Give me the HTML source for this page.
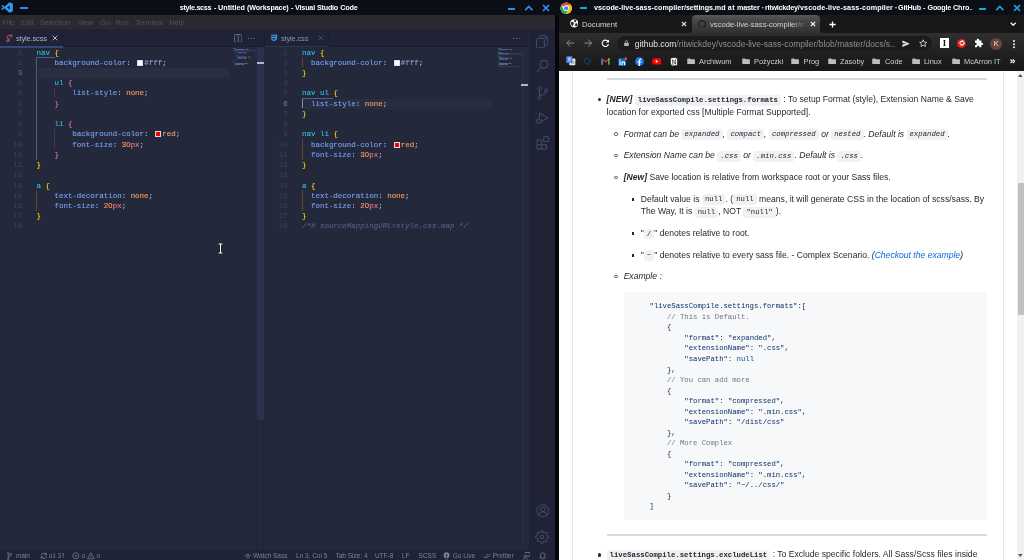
<!DOCTYPE html>
<html>
<head>
<meta charset="utf-8">
<title>screenshot</title>
<style>
*{box-sizing:border-box;margin:0;padding:0}
html,body{width:1024px;height:560px;overflow:hidden;background:#05070b;font-family:"Liberation Sans",sans-serif;}
.abs{position:absolute}
#root{position:relative;width:1024px;height:560px;overflow:hidden;background:#05070b;will-change:transform}

/* ---------- title bars ---------- */
#tb{left:0;top:0;width:1024px;height:15px;background:#0b0f15}
.ttl{position:absolute;top:0;height:15px;line-height:15px;color:#fff;font-weight:bold;font-size:7.2px;white-space:nowrap}
#t1{letter-spacing:-0.12px}#t2{letter-spacing:-0.077px}

/* ---------- VS Code ---------- */
#vs{left:0;top:15px;width:555px;height:545px;background:#24283b;overflow:hidden}
#menu{left:0;top:0;width:555px;height:14px;background:#29292f;color:#505056;font-size:7.3px;line-height:14px;white-space:nowrap}
#menu span{position:absolute;top:0.5px}
#tabs{left:0;top:14px;width:528px;height:18px;background:#1f2335}
.tabtxt{position:absolute;font-size:7.6px;line-height:18px;top:0.5px;white-space:nowrap;letter-spacing:-0.2px}
#act{left:528.6px;top:14px;width:26.4px;height:521px;background:#1f2335}
#status{left:0;top:534.8px;width:555px;height:10.2px;background:#1f2335;color:#7a80a0;font-size:6.5px;line-height:11.4px;white-space:nowrap}
#status span{position:absolute;top:0}
.ed{position:absolute;top:32px;height:502px;background:#24283b;overflow:hidden}
.code{position:absolute;top:0.5px;font-family:"Liberation Mono",monospace;font-size:7.47px;line-height:10.24px;white-space:pre;color:#9abdf5;-webkit-text-stroke:0.1px currentColor}
.ln{position:absolute;top:0.5px;font-family:"Liberation Mono",monospace;font-size:7.47px;line-height:10.24px;white-space:pre;color:#3b4261;text-align:right}
.ln b{font-weight:normal;color:#737aa2}
.s{color:#2ac3de}.p{color:#7aa2f7}.v{color:#ff9e64}.u{color:#f7768e}.h{color:#9aa5ce}.g{color:#ffd700}.o{color:#da70d6}.c{color:#565f89;font-style:italic}.pt{color:#89ddff}
.z{font-family:"Liberation Sans",sans-serif;font-style:normal;display:inline-block;width:4.482px;text-align:center;font-size:7.6px;line-height:1}
.sw{display:inline-block;width:6px;height:6px;border:0.7px solid #d8dcea;margin:0 1.3px 0 1.9px;vertical-align:-0.9px}

/* ---------- Chrome ---------- */
#ch{left:559px;top:15px;width:465px;height:545px;background:#fff;overflow:hidden}
#cstrip{left:0;top:0;width:465px;height:18px;background:#181818}
#ctool{left:0;top:18px;width:465px;height:19px;background:linear-gradient(#2f2f2f,#212121)}
#cbm{left:0;top:37px;width:465px;height:18.5px;background:linear-gradient(#212121,#171717);color:#cfcfcf;font-size:7.4px;line-height:18.5px;white-space:nowrap}
#cbm span{position:absolute;top:0.9px}
#page{left:0;top:55.5px;width:458px;height:489.5px;background:#fff;overflow:hidden}
#sb{left:458px;top:55.5px;width:7px;height:489.5px;background:#f1f1f1}

/* github markdown */
#box{position:absolute;left:12.5px;top:-40px;width:432.5px;height:700px;border-left:1px solid #e2e6ed;border-right:1px solid #e2e6ed}
#md{position:absolute;left:30.5px;top:-5.0px;width:397px;color:#24292f;font-size:8.6px;line-height:12.8px}
#md ul{padding-left:17.07px}
#md li>p{margin-top:8.85px;margin-bottom:8.85px}
#md hr{border:0;height:2.13px;background:#d5dbe3;margin:12.8px 0}
#md code{font-family:"Liberation Mono",monospace;font-size:7.31px;background:#eff1f3;border-radius:3.2px;padding:1.3px 3.05px;font-style:inherit;line-height:1}
#md pre{font-family:"Liberation Mono",monospace;font-size:7.25px;line-height:10.52px;background:#f6f8fa;border-radius:3.2px;padding:8.93px 8.53px 8.13px;margin:9.4px 0 14.2px 0;white-space:pre;overflow:hidden;color:#24292f}
#md pre .k{color:#6e7781}.n{color:#0550ae}.st{color:#0a3069}
#md a{color:#0969da;text-decoration:none}
#md ul{list-style:none}
#md li>p:first-of-type{position:relative}
#md li>p:first-of-type::before{content:"";position:absolute;left:-8.5px;top:4.9px;width:3.3px;height:3.3px;background:#24292f;border-radius:50%}
#md ul.ci>li>p:first-of-type::before{box-sizing:border-box;background:#fff;border:0.7px solid #4a4f57;left:-9.3px;top:4.8px;width:3.4px;height:3.4px}
#md ul.sq>li>p:first-of-type::before{border-radius:0;left:-9.0px;top:5.3px;width:2.8px;height:2.8px}
</style>
</head>
<body>
<div id="root">

<!-- title bar -->
<div id="tb" class="abs">
  <!-- vscode logo -->
  <svg class="abs" style="left:0.5px;top:2px" width="12" height="11" viewBox="0 0 24 22"><path d="M17 0.3 L7 9.3 L2.8 6 L0.3 7.2 L4.2 11 L0.3 14.8 L2.8 16 L7 12.7 L17 21.7 L23.6 18.8 V3.2 Z M17.4 7.2 V14.8 L12.2 11 Z" fill="#2a9cf4"/></svg>
  <div class="abs" style="left:20px;top:7px;width:7.5px;height:1.6px;background:#2e8bf0"></div>
  <div class="ttl" style="left:179.75px;letter-spacing:-0.287px">style.scss</div>
  <div class="ttl" style="left:214px;letter-spacing:0.000px">-</div>
  <div class="ttl" style="left:218px;letter-spacing:0.031px">Untitled</div>
  <div class="ttl" style="left:247px;letter-spacing:-0.137px">(Workspace)</div>
  <div class="ttl" style="left:291px;letter-spacing:0.000px">-</div>
  <div class="ttl" style="left:295px;letter-spacing:-0.174px">Visual</div>
  <div class="ttl" style="left:317px;letter-spacing:-0.226px">Studio</div>
  <div class="ttl" style="left:340.25px;letter-spacing:-0.117px">Code</div>
  <!-- vs controls -->
  <div class="abs" style="left:508px;top:8px;width:7.4px;height:1.7px;background:#2e8bf0"></div>
  <svg class="abs" style="left:524px;top:4px" width="10" height="8" viewBox="0 0 10 8"><path d="M1.2 6.2 L4.8 2.4 L8.4 6.2" fill="none" stroke="#2e8bf0" stroke-width="1.7"/></svg>
  <svg class="abs" style="left:542px;top:4px" width="8" height="8" viewBox="0 0 8 8"><path d="M1 1.2 L7 6.8 M7 1.2 L1 6.8" fill="none" stroke="#2e8bf0" stroke-width="1.6"/></svg>
  <!-- chrome logo -->
  <svg class="abs" style="left:560px;top:2px" width="12.4" height="12.4" viewBox="0 0 48 48"><circle cx="24" cy="24" r="22" fill="#fff"/><path d="M24 2 A22 22 0 0 1 43.05 13 H24 A11 11 0 0 0 14.47 18.5 L5 13.1 A22 22 0 0 1 24 2Z" fill="#ea4335"/><path d="M43.05 13 A22 22 0 0 1 24 46 L33.53 29.5 A11 11 0 0 0 33.53 18.5 L24 13Z" fill="#fbbc05"/><path d="M5 13.1 L14.47 29.5 A11 11 0 0 0 33.53 29.5 L24 46 A22 22 0 0 1 5 13.1Z" fill="#34a853"/><circle cx="24" cy="24" r="10" fill="#fff"/><circle cx="24" cy="24" r="8" fill="#4285f4"/></svg>
  <div class="abs" style="left:580px;top:7px;width:7.2px;height:1.6px;background:#1ca4dc"></div>
  <div class="ttl" style="left:594px;letter-spacing:0.005px">vscode-live-sass-compiler</div>
  <div class="ttl" style="left:684px;letter-spacing:-0.069px">/settings.md</div>
  <div class="ttl" style="left:727.75px;letter-spacing:0.430px">at</div>
  <div class="ttl" style="left:737px;letter-spacing:-0.179px">master</div>
  <div class="ttl" style="left:761.75px;letter-spacing:0.000px">·</div>
  <div class="ttl" style="left:765px;letter-spacing:-0.240px">ritwickdey</div>
  <div class="ttl" style="left:797.75px;letter-spacing:0.130px">/vscode-live-sass-compiler</div>
  <div class="ttl" style="left:895px;letter-spacing:0.000px">·</div>
  <div class="ttl" style="left:898px;letter-spacing:-0.159px">GitHub</div>
  <div class="ttl" style="left:923px;letter-spacing:0.000px">-</div>
  <div class="ttl" style="left:927.5px;letter-spacing:-0.209px">Google</div>
  <div class="ttl" style="left:953px;letter-spacing:-0.1px">Chro<span style="font-size:4.6px;letter-spacing:-0.3px">...</span></div>
  <!-- chrome controls -->
  <div class="abs" style="left:978.5px;top:8px;width:7.4px;height:1.7px;background:#1ca4dc"></div>
  <svg class="abs" style="left:995px;top:4px" width="10" height="8" viewBox="0 0 10 8"><path d="M1.2 6.2 L4.8 2.4 L8.4 6.2" fill="none" stroke="#1ca4dc" stroke-width="1.7"/></svg>
  <svg class="abs" style="left:1013px;top:4px" width="8" height="8" viewBox="0 0 8 8"><path d="M1 1.2 L7 6.8 M7 1.2 L1 6.8" fill="none" stroke="#1ca4dc" stroke-width="1.6"/></svg>
</div>

<!-- VS CODE -->
<div id="vs" class="abs">
  <div id="menu" class="abs">
    <span style="left:2.3px">File</span><span style="left:21px">Edit</span><span style="left:40px">Selection</span><span style="left:77.5px">View</span><span style="left:100px">Go</span><span style="left:115.5px">Run</span><span style="left:135.4px">Terminal</span><span style="left:169.5px">Help</span>
  </div>
  <div id="tabs" class="abs">
    <!-- tab 1 active -->
    <div class="abs" style="left:0;top:0;width:62.5px;height:18px;background:#1f2335;border-right:0.7px solid #1b1e2f"></div>
    <svg class="abs" style="left:4.5px;top:4.5px" width="8.5" height="9" viewBox="0 0 17 18"><path d="M13.5 2.2 C9.5 1.2 3.2 4.2 3.4 7.2 C3.6 9.6 8.6 9.2 9.2 11.4 C9.8 13.6 5.2 16.4 3.4 14.6 C2 13 5.4 10.4 8 12.8 M13.5 2.2 C15.6 3 14.2 6.2 10.8 6.6" fill="none" stroke="#e0566c" stroke-width="1.9" stroke-linecap="round"/></svg>
    <div class="tabtxt" style="left:16px;color:#a9b1d6">style.scss</div>
    <svg class="abs" style="left:52px;top:6px" width="6" height="6" viewBox="0 0 6 6"><path d="M0.7 0.7 L5.3 5.3 M5.3 0.7 L0.7 5.3" stroke="#c0c6e0" stroke-width="0.9" fill="none"/></svg>
    <!-- split / more -->
    <svg class="abs" style="left:234px;top:4.6px" width="8.4" height="8.8" viewBox="0 0 8.4 8.8"><rect x="0.5" y="0.5" width="7.4" height="7.8" rx="1.2" fill="none" stroke="#6b7394" stroke-width="0.9"/><path d="M4.2 0.5 V8.3" stroke="#6b7394" stroke-width="0.9"/></svg>
    <div class="abs" style="left:248.4px;top:8.6px;width:1.1px;height:1.1px;background:#6b7394;box-shadow:2.9px 0 #6b7394,5.8px 0 #6b7394"></div>
    <!-- group 2 -->
    <div class="abs" style="left:264px;top:0;width:1px;height:18px;background:#1a1d2e"></div>
    <div class="abs" style="left:62.5px;top:17.2px;width:202px;height:0.8px;background:#1a1d2e"></div>
    <div class="abs" style="left:265px;top:17.2px;width:263px;height:0.8px;background:#1a1d2e"></div>
    <div class="abs" style="left:265px;top:16.9px;width:63px;height:1.1px;background:#2f3450"></div>
    <div class="abs" style="left:327.6px;top:0;width:0.7px;height:18px;background:#1b1e2f"></div>
    <svg class="abs" style="left:269.8px;top:5.4px" width="8" height="7.4" viewBox="0 0 16 16" preserveAspectRatio="none"><path d="M1.5 1.5 H14.5 L13.2 13 L8 15 L2.8 13 L2.5 10 H5 L5.2 11.4 L8 12.4 L10.8 11.4 L11.2 8.6 H2.4 L2.1 6 H11.5 L11.8 4 H1.8 Z" fill="#42a5f5"/></svg>
    <div class="tabtxt" style="left:281px;color:#8b90ad">style.css</div>
    <svg class="abs" style="left:318px;top:6.2px" width="5.6" height="5.6" viewBox="0 0 6 6"><path d="M0.7 0.7 L5.3 5.3 M5.3 0.7 L0.7 5.3" stroke="#565f89" stroke-width="0.8" fill="none"/></svg>
    <div class="abs" style="left:512.6px;top:8.6px;width:1.1px;height:1.1px;background:#6b7394;box-shadow:2.9px 0 #6b7394,5.8px 0 #6b7394"></div>
  </div>
  <div id="act" class="abs">
    <!-- files -->
    <svg class="abs" style="left:7.2px;top:5.6px" width="12.4" height="13.4" viewBox="0 0 24.8 26.8"><path d="M8.2 6.4 V3 Q8.2 1 10.2 1 H18.4 L23.6 6.2 V17.6 Q23.6 19.6 21.6 19.6 H16.8" fill="none" stroke="#4a5173" stroke-width="1.8"/><path d="M18 1.2 V6.6 H23.4" fill="none" stroke="#4a5173" stroke-width="1.6"/><path d="M3 6.8 H14.6 Q16.6 6.8 16.6 8.8 V23.6 Q16.6 25.6 14.6 25.6 H3 Q1 25.6 1 23.6 V8.8 Q1 6.8 3 6.8 Z" fill="none" stroke="#4a5173" stroke-width="1.8"/></svg>
    <!-- search -->
    <svg class="abs" style="left:7.5px;top:30px" width="13" height="14" viewBox="0 0 26 28"><circle cx="16" cy="10.5" r="8" fill="none" stroke="#4a5173" stroke-width="1.9"/><path d="M10.3 16.5 L2 26" stroke="#4a5173" stroke-width="1.9" fill="none"/></svg>
    <!-- scm -->
    <svg class="abs" style="left:8px;top:56.5px" width="11.5" height="14" viewBox="0 0 23 28"><circle cx="5" cy="4.5" r="3" fill="none" stroke="#4a5173" stroke-width="1.8"/><circle cx="5" cy="23.5" r="3" fill="none" stroke="#4a5173" stroke-width="1.8"/><circle cx="18" cy="9" r="3" fill="none" stroke="#4a5173" stroke-width="1.8"/><path d="M5 7.5 V20.5 M18 12 Q18 17 5 19" fill="none" stroke="#4a5173" stroke-width="1.8"/></svg>
    <!-- debug -->
    <svg class="abs" style="left:6.5px;top:81.5px" width="14.5" height="14" viewBox="0 0 29 28"><path d="M9 4 L26 13.5 L13 21" fill="none" stroke="#4a5173" stroke-width="1.9" stroke-linejoin="round"/><path d="M9 4 V13" stroke="#4a5173" stroke-width="1.9"/><circle cx="7.5" cy="20.5" r="4.3" fill="none" stroke="#4a5173" stroke-width="1.7"/><path d="M1 17 L3.5 18.5 M1 24.5 L3.5 23 M14 17 L11.5 18.5 M14 24.5 L11.5 23 M7.5 14 V16" stroke="#4a5173" stroke-width="1.4"/></svg>
    <!-- extensions -->
    <svg class="abs" style="left:7.5px;top:107px" width="13.5" height="13.5" viewBox="0 0 27 27"><path d="M2 8 H11.5 V17.5 H21 V26 H2 Z M11.5 17.5 H2 M11.5 17.5 V26" fill="none" stroke="#4a5173" stroke-width="1.8" stroke-linejoin="round"/><rect x="15.5" y="1.5" width="9.5" height="9.5" rx="1" fill="none" stroke="#4a5173" stroke-width="1.8"/></svg>
    <!-- account -->
    <svg class="abs" style="left:7px;top:475px" width="13.5" height="13.5" viewBox="0 0 27 27"><circle cx="13.5" cy="13.5" r="12" fill="none" stroke="#4a5173" stroke-width="1.8"/><circle cx="13.5" cy="10.5" r="4.5" fill="none" stroke="#4a5173" stroke-width="1.8"/><path d="M5.5 22 Q6 15.5 13.5 15.5 Q21 15.5 21.5 22" fill="none" stroke="#4a5173" stroke-width="1.8"/></svg>
    <!-- gear -->
    <svg class="abs" style="left:6.6px;top:500.8px" width="14" height="14" viewBox="0 0 27 27"><path d="M11.14 4.61 L11.86 1.31 L15.14 1.31 L15.86 4.61 L18.12 5.54 L20.96 3.72 L23.28 6.04 L21.46 8.88 L22.39 11.14 L25.69 11.86 L25.69 15.14 L22.39 15.86 L21.46 18.12 L23.28 20.96 L20.96 23.28 L18.12 21.46 L15.86 22.39 L15.14 25.69 L11.86 25.69 L11.14 22.39 L8.88 21.46 L6.04 23.28 L3.72 20.96 L5.54 18.12 L4.61 15.86 L1.31 15.14 L1.31 11.86 L4.61 11.14 L5.54 8.88 L3.72 6.04 L6.04 3.72 L8.88 5.54 Z" fill="none" stroke="#4a5173" stroke-width="1.7" stroke-linejoin="round"/><circle cx="13.5" cy="13.5" r="3.4" fill="none" stroke="#4a5173" stroke-width="1.7"/></svg>
  </div>
  <div id="ed1" class="ed" style="left:0;width:264px">
    <div class="abs" style="left:37.5px;top:20.78px;width:191.5px;height:10.24px;background:#2a2e43"></div>
    <!-- guides -->
    <div class="abs" style="left:36.2px;top:10.24px;width:1px;height:102.40px;background:#4d5d92"></div>
    <div class="abs" style="left:36.2px;top:9.94px;width:18.5px;height:1px;background:#4d5d92"></div>
    <div class="abs" style="left:54.3px;top:40.96px;width:1px;height:10.24px;background:#4a3160"></div>
    <div class="abs" style="left:54.3px;top:81.92px;width:1px;height:20.48px;background:#4a3160"></div>
    <div class="abs" style="left:36.2px;top:143.36px;width:1px;height:20.48px;background:#5d4a2c"></div>
    <div class="ln" style="left:0;width:22.3px">1
2
<b>3</b>
4
5
6
7
8
9
10
11
12
13
14
15
16
17
18</div>
    <div class="code" style="left:36.5px"><span class="s">nav</span> <span class="g">{</span>
    <span class="p">background-color</span>: <i class="sw" style="background:#fff"></i><span class="h">#fff</span>;

    <span class="s">ul</span> <span class="o">{</span>
        <span class="p">list-style</span>: <span class="v">none</span>;
    <span class="o">}</span>

    <span class="s">li</span> <span class="o">{</span>
        <span class="p">background-color</span>: <i class="sw" style="background:#f00"></i><span class="v">red</span>;
        <span class="p">font-size</span>: <span class="v">3<i class="z">0</i></span><span class="u">px</span>;
    <span class="o">}</span>
<span class="g">}</span>

<span class="s">a</span> <span class="g">{</span>
    <span class="p">text-decoration</span>: <span class="v">none</span>;
    <span class="p">font-size</span>: <span class="v">2<i class="z">0</i></span><span class="u">px</span>;
<span class="g">}</span>
</div>
    <!-- minimap -->
    <div class="abs mm" style="left:233px;top:0;width:24px;height:30px"><svg class="abs mmsvg" width="24" height="22" viewBox="0 0 24 22" style="left:0;top:0.6px"><rect x="0" y="2.13" width="24" height="1.07" fill="#3d59a1" opacity="0.55"/><rect x="0.00" y="0.10" width="1.68" height="0.85" fill="#2ac3de" opacity="0.6"/><rect x="2.24" y="0.10" width="0.56" height="0.85" fill="#c9a600" opacity="0.6"/><rect x="2.24" y="1.17" width="8.96" height="0.85" fill="#7aa2f7" opacity="0.6"/><rect x="11.20" y="1.17" width="0.56" height="0.85" fill="#8790b5" opacity="0.6"/><rect x="12.88" y="1.17" width="2.24" height="0.85" fill="#8790b5" opacity="0.6"/><rect x="15.12" y="1.17" width="0.56" height="0.85" fill="#8790b5" opacity="0.6"/><rect x="2.24" y="3.30" width="1.12" height="0.85" fill="#2ac3de" opacity="0.6"/><rect x="3.92" y="3.30" width="0.56" height="0.85" fill="#b35fb0" opacity="0.6"/><rect x="4.48" y="4.37" width="5.60" height="0.85" fill="#7aa2f7" opacity="0.6"/><rect x="10.08" y="4.37" width="0.56" height="0.85" fill="#8790b5" opacity="0.6"/><rect x="11.20" y="4.37" width="2.24" height="0.85" fill="#ff9e64" opacity="0.6"/><rect x="13.44" y="4.37" width="0.56" height="0.85" fill="#8790b5" opacity="0.6"/><rect x="2.24" y="5.43" width="0.56" height="0.85" fill="#b35fb0" opacity="0.6"/><rect x="2.24" y="7.57" width="1.12" height="0.85" fill="#2ac3de" opacity="0.6"/><rect x="3.92" y="7.57" width="0.56" height="0.85" fill="#b35fb0" opacity="0.6"/><rect x="4.48" y="8.64" width="8.96" height="0.85" fill="#7aa2f7" opacity="0.6"/><rect x="13.44" y="8.64" width="0.56" height="0.85" fill="#8790b5" opacity="0.6"/><rect x="15.12" y="8.64" width="1.68" height="0.85" fill="#ff9e64" opacity="0.6"/><rect x="16.80" y="8.64" width="0.56" height="0.85" fill="#8790b5" opacity="0.6"/><rect x="4.48" y="9.70" width="5.04" height="0.85" fill="#7aa2f7" opacity="0.6"/><rect x="9.52" y="9.70" width="0.56" height="0.85" fill="#8790b5" opacity="0.6"/><rect x="10.64" y="9.70" width="2.24" height="0.85" fill="#ff9e64" opacity="0.6"/><rect x="12.88" y="9.70" width="0.56" height="0.85" fill="#8790b5" opacity="0.6"/><rect x="2.24" y="10.77" width="0.56" height="0.85" fill="#b35fb0" opacity="0.6"/><rect x="0.00" y="11.84" width="0.56" height="0.85" fill="#c9a600" opacity="0.6"/><rect x="0.00" y="13.97" width="0.56" height="0.85" fill="#2ac3de" opacity="0.6"/><rect x="1.12" y="13.97" width="0.56" height="0.85" fill="#c9a600" opacity="0.6"/><rect x="2.24" y="15.04" width="8.40" height="0.85" fill="#7aa2f7" opacity="0.6"/><rect x="10.64" y="15.04" width="0.56" height="0.85" fill="#8790b5" opacity="0.6"/><rect x="11.76" y="15.04" width="2.24" height="0.85" fill="#ff9e64" opacity="0.6"/><rect x="14.00" y="15.04" width="0.56" height="0.85" fill="#8790b5" opacity="0.6"/><rect x="2.24" y="16.11" width="5.04" height="0.85" fill="#7aa2f7" opacity="0.6"/><rect x="7.28" y="16.11" width="0.56" height="0.85" fill="#8790b5" opacity="0.6"/><rect x="8.40" y="16.11" width="2.24" height="0.85" fill="#ff9e64" opacity="0.6"/><rect x="10.64" y="16.11" width="0.56" height="0.85" fill="#8790b5" opacity="0.6"/><rect x="0.00" y="17.17" width="0.56" height="0.85" fill="#c9a600" opacity="0.6"/></svg></div>
    <!-- scrollbar band -->
    <div class="abs" style="left:256.6px;top:0;width:7.6px;height:503px;background:#24283b;border-left:0.8px solid #1f2336;border-right:0.8px solid #1f2336"></div>
    <div class="abs" style="left:256.8px;top:0;width:7.3px;height:373.2px;background:#2d314c"></div>
    <div class="abs" style="left:257px;top:15px;width:7.4px;height:1.6px;background:#aeb6d8"></div>
    <!-- I-beam cursor -->
    <svg class="abs" style="left:217.4px;top:195.6px" width="7" height="11" viewBox="0 0 7 12" preserveAspectRatio="none"><path d="M1.2 1 H5.8 M3.5 1 V11 M1.2 11 H5.8" stroke="#111" stroke-width="2.4" fill="none"/><path d="M1.5 1 H5.5 M3.5 1 V11 M1.5 11 H5.5" stroke="#fff" stroke-width="1.1" fill="none"/></svg>
  </div>
  <div id="ed2" class="ed" style="left:264.4px;width:264px">
    <div class="abs" style="left:37px;top:51.50px;width:192px;height:10.24px;background:#292d42"></div>
    <div class="abs" style="left:37.4px;top:10.24px;width:1px;height:10.24px;background:#5d4a2c"></div>
    <div class="abs" style="left:37.4px;top:51.20px;width:1px;height:10.24px;background:#7a86b8"></div>
    <div class="abs" style="left:37.4px;top:51.00px;width:31px;height:1px;background:#4d5d92"></div>
    <div class="abs" style="left:37.4px;top:92.16px;width:1px;height:20.48px;background:#5d4a2c"></div>
    <div class="abs" style="left:37.4px;top:143.36px;width:1px;height:20.48px;background:#5d4a2c"></div>
    <div class="ln" style="left:0;width:23.3px">1
2
3
4
5
<b>6</b>
7
8
9
10
11
12
13
14
15
16
17
18</div>
    <div class="code" style="left:37.6px"><span class="s">nav</span> <span class="g">{</span>
  <span class="p">background-color</span>: <i class="sw" style="background:#fff"></i><span class="h">#fff</span>;
<span class="g">}</span>

<span class="s">nav ul</span> <span class="g">{</span>
  <span class="p">list-style</span>: <span class="v">none</span>;
<span class="g">}</span>

<span class="s">nav li</span> <span class="g">{</span>
  <span class="p">background-color</span>: <i class="sw" style="background:#f00"></i><span class="v">red</span>;
  <span class="p">font-size</span>: <span class="v">3<i class="z">0</i></span><span class="u">px</span>;
<span class="g">}</span>

<span class="s">a</span> <span class="g">{</span>
  <span class="p">text-decoration</span>: <span class="v">none</span>;
  <span class="p">font-size</span>: <span class="v">2<i class="z">0</i></span><span class="u">px</span>;
<span class="g">}</span>
<span class="c">/*# sourceMappingURL=style.css.map */</span></div>
    <div class="abs mm2" style="left:233.6px;top:0;width:24px;height:30px"><svg class="abs mmsvg" width="24" height="22" viewBox="0 0 24 22" style="left:0;top:0.6px"><rect x="0" y="5.33" width="24" height="1.07" fill="#3d59a1" opacity="0.55"/><rect x="0.00" y="0.10" width="1.68" height="0.85" fill="#2ac3de" opacity="0.6"/><rect x="2.24" y="0.10" width="0.56" height="0.85" fill="#c9a600" opacity="0.6"/><rect x="1.12" y="1.17" width="8.96" height="0.85" fill="#7aa2f7" opacity="0.6"/><rect x="10.08" y="1.17" width="0.56" height="0.85" fill="#8790b5" opacity="0.6"/><rect x="11.76" y="1.17" width="2.24" height="0.85" fill="#8790b5" opacity="0.6"/><rect x="14.00" y="1.17" width="0.56" height="0.85" fill="#8790b5" opacity="0.6"/><rect x="0.00" y="2.23" width="0.56" height="0.85" fill="#c9a600" opacity="0.6"/><rect x="0.00" y="4.37" width="3.36" height="0.85" fill="#2ac3de" opacity="0.6"/><rect x="3.92" y="4.37" width="0.56" height="0.85" fill="#c9a600" opacity="0.6"/><rect x="1.12" y="5.43" width="5.60" height="0.85" fill="#7aa2f7" opacity="0.6"/><rect x="6.72" y="5.43" width="0.56" height="0.85" fill="#8790b5" opacity="0.6"/><rect x="7.84" y="5.43" width="2.24" height="0.85" fill="#ff9e64" opacity="0.6"/><rect x="10.08" y="5.43" width="0.56" height="0.85" fill="#8790b5" opacity="0.6"/><rect x="0.00" y="6.50" width="0.56" height="0.85" fill="#c9a600" opacity="0.6"/><rect x="0.00" y="8.64" width="3.36" height="0.85" fill="#2ac3de" opacity="0.6"/><rect x="3.92" y="8.64" width="0.56" height="0.85" fill="#c9a600" opacity="0.6"/><rect x="1.12" y="9.70" width="8.96" height="0.85" fill="#7aa2f7" opacity="0.6"/><rect x="10.08" y="9.70" width="0.56" height="0.85" fill="#8790b5" opacity="0.6"/><rect x="11.76" y="9.70" width="1.68" height="0.85" fill="#ff9e64" opacity="0.6"/><rect x="13.44" y="9.70" width="0.56" height="0.85" fill="#8790b5" opacity="0.6"/><rect x="1.12" y="10.77" width="5.04" height="0.85" fill="#7aa2f7" opacity="0.6"/><rect x="6.16" y="10.77" width="0.56" height="0.85" fill="#8790b5" opacity="0.6"/><rect x="7.28" y="10.77" width="2.24" height="0.85" fill="#ff9e64" opacity="0.6"/><rect x="9.52" y="10.77" width="0.56" height="0.85" fill="#8790b5" opacity="0.6"/><rect x="0.00" y="11.84" width="0.56" height="0.85" fill="#c9a600" opacity="0.6"/><rect x="0.00" y="13.97" width="0.56" height="0.85" fill="#2ac3de" opacity="0.6"/><rect x="1.12" y="13.97" width="0.56" height="0.85" fill="#c9a600" opacity="0.6"/><rect x="1.12" y="15.04" width="8.40" height="0.85" fill="#7aa2f7" opacity="0.6"/><rect x="9.52" y="15.04" width="0.56" height="0.85" fill="#8790b5" opacity="0.6"/><rect x="10.64" y="15.04" width="2.24" height="0.85" fill="#ff9e64" opacity="0.6"/><rect x="12.88" y="15.04" width="0.56" height="0.85" fill="#8790b5" opacity="0.6"/><rect x="1.12" y="16.11" width="5.04" height="0.85" fill="#7aa2f7" opacity="0.6"/><rect x="6.16" y="16.11" width="0.56" height="0.85" fill="#8790b5" opacity="0.6"/><rect x="7.28" y="16.11" width="2.24" height="0.85" fill="#ff9e64" opacity="0.6"/><rect x="9.52" y="16.11" width="0.56" height="0.85" fill="#8790b5" opacity="0.6"/><rect x="0.00" y="17.17" width="0.56" height="0.85" fill="#c9a600" opacity="0.6"/><rect x="0.00" y="18.24" width="20.72" height="0.85" fill="#4a5275" opacity="0.6"/></svg></div>
    <div class="abs" style="left:257.2px;top:0;width:7.4px;height:503px;background:#25293d;border-left:0.8px solid #2b2f46;border-right:0.8px solid #1f2336"></div>
    <div class="abs" style="left:256.6px;top:37.2px;width:7.4px;height:1.6px;background:#aeb6d8"></div>
  </div>
  <div class="abs" style="left:0;top:31px;width:62.5px;height:2px;background:#34487e"></div>
  <div id="status" class="abs">
    <svg class="abs" style="left:6.6px;top:2.5px" width="5" height="8" viewBox="0 0 10 16"><circle cx="2.5" cy="2.5" r="1.7" fill="none" stroke="#7a80a0" stroke-width="1.4"/><circle cx="2.5" cy="13.5" r="1.7" fill="none" stroke="#7a80a0" stroke-width="1.4"/><circle cx="7.5" cy="4.5" r="1.7" fill="none" stroke="#7a80a0" stroke-width="1.4"/><path d="M2.5 4.2 V11.8 M7.5 6.2 Q7.5 9 2.5 10" fill="none" stroke="#7a80a0" stroke-width="1.4"/></svg>
    <span style="left:15.9px">main</span>
    <svg class="abs" style="left:39.5px;top:2.5px" width="7.6" height="7.6" viewBox="0 0 16 16"><path d="M2.5 7 A5.5 5.5 0 0 1 13 5.5 M13.5 9 A5.5 5.5 0 0 1 3 10.5" fill="none" stroke="#7a80a0" stroke-width="1.6"/><path d="M13.6 1.5 V6 H9.2 M2.4 14.5 V10 H6.8" fill="none" stroke="#7a80a0" stroke-width="1.5"/></svg>
    <span style="left:48.8px">o</span><svg class="abs" style="left:53.2px;top:3.6px" width="2.4" height="5" viewBox="0 0 2.4 5"><path d="M1.2 0 V4.6 M0.2 3.6 L1.2 4.7 L2.2 3.6" fill="none" stroke="#7a80a0" stroke-width="0.7"/></svg><span style="left:57.4px">3</span><svg class="abs" style="left:61.6px;top:3.6px" width="2.4" height="5" viewBox="0 0 2.4 5"><path d="M1.2 5 V0.4 M0.2 1.4 L1.2 0.3 L2.2 1.4" fill="none" stroke="#7a80a0" stroke-width="0.7"/></svg>
    <svg class="abs" style="left:72.4px;top:2.4px" width="7.6" height="7.6" viewBox="0 0 16 16"><circle cx="8" cy="8" r="6.6" fill="none" stroke="#7a80a0" stroke-width="1.5"/><path d="M5.3 5.3 L10.7 10.7 M10.7 5.3 L5.3 10.7" stroke="#7a80a0" stroke-width="1.4"/></svg>
    <span style="left:81.6px">o</span>
    <svg class="abs" style="left:87.3px;top:2.4px" width="7.6" height="7.6" viewBox="0 0 16 16"><path d="M8 1.6 L15 14.2 H1 Z" fill="none" stroke="#7a80a0" stroke-width="1.5" stroke-linejoin="round"/><path d="M8 6 V10 M8 11.3 V12.7" stroke="#7a80a0" stroke-width="1.4"/></svg>
    <span style="left:96.4px">o</span>

    <svg class="abs" style="left:244px;top:3.1px" width="7.6" height="6" viewBox="0 0 16 12"><path d="M1 7 Q8 -3 15 7" fill="none" stroke="#7a80a0" stroke-width="1.6"/><circle cx="8" cy="7.5" r="2.6" fill="none" stroke="#7a80a0" stroke-width="1.5"/></svg>
    <span style="left:253px">Watch Sass</span>
    <span style="left:295.9px">Ln 3, Col 5</span>
    <span style="left:335.5px">Tab Size: 4</span>
    <span style="left:374.9px">UTF-8</span>
    <span style="left:402px">LF</span>
    <span style="left:418.6px">SCSS</span>
    <svg class="abs" style="left:443.4px;top:2.5px" width="7" height="7.4" viewBox="0 0 14 15"><circle cx="7" cy="6.5" r="6" fill="#7a80a0"/><path d="M7 6.5 V14.5" stroke="#1f2335" stroke-width="1.3"/><circle cx="7" cy="6.3" r="1.8" fill="#1f2335"/><path d="M4.3 14.6 H9.7" stroke="#7a80a0" stroke-width="1.2"/></svg>
    <span style="left:452.8px">Go Live</span>
    <svg class="abs" style="left:483px;top:3.1px" width="8.4" height="6" viewBox="0 0 17 12"><path d="M1 7 L4 10 L10.5 1.5 M7 9.2 L8 10 L15.5 1.5" fill="none" stroke="#7a80a0" stroke-width="1.5"/></svg>
    <span style="left:492.7px">Prettier</span>
    <svg class="abs" style="left:522.6px;top:2.3px" width="7.6" height="8" viewBox="0 0 15 16"><path d="M3 1 H14 V8 H11 L9.5 10 V8 H8" fill="none" stroke="#7a80a0" stroke-width="1.4"/><circle cx="4.6" cy="8.3" r="2.2" fill="none" stroke="#7a80a0" stroke-width="1.3"/><path d="M1 15.5 Q1 11.2 4.6 11.2 Q8.2 11.2 8.2 15.5" fill="none" stroke="#7a80a0" stroke-width="1.3"/></svg>
    <svg class="abs" style="left:539px;top:2.3px" width="7.4" height="8" viewBox="0 0 15 16"><path d="M7.5 1.5 Q3.2 1.5 3.2 6.5 V10 L1.5 12.2 H13.5 L11.8 10 V6.5 Q11.8 1.5 7.5 1.5 Z" fill="none" stroke="#7a80a0" stroke-width="1.4" stroke-linejoin="round"/><path d="M6 13.6 Q7.5 15.4 9 13.6" fill="none" stroke="#7a80a0" stroke-width="1.3"/></svg>
  </div>
</div>

<!-- CHROME -->
<div id="ch" class="abs">
  <div id="cstrip" class="abs">
    <!-- doc tab -->
    <svg class="abs" style="left:10.6px;top:4.2px" width="8.6" height="8.6" viewBox="0 0 18 18"><circle cx="9" cy="9" r="8.7" fill="#f4f4f4"/><path d="M2.2 6.5 Q4.5 5.6 6.4 7 Q8.4 8.2 8 10.2 Q6.6 10.8 6.8 12.6 Q6.8 14.2 5.6 15 Q3.4 13.6 2.4 11.2 Q1.8 8.6 2.2 6.5 Z M8.4 1.6 Q11 1.2 13.2 2.6 Q13.8 4.4 12.2 5.6 Q10.4 5.4 10.2 7 Q8.6 6.6 8.6 5 Q9.8 3.6 8.4 1.6 Z M11.4 9.2 Q13.6 8.4 15.6 9.8 Q16.2 11.6 15 13.4 Q13.4 15.6 11.6 15.4 Q10.4 13.6 11 12 Q10.2 10.4 11.4 9.2 Z" fill="#1d1d1d"/></svg>
    <div class="abs" style="left:23px;top:0.9px;line-height:18px;font-size:7.7px;color:#d6d6d6">Document</div>
    <svg class="abs" style="left:122px;top:6px" width="6" height="6" viewBox="0 0 6 6"><path d="M0.8 0.8 L5.2 5.2 M5.2 0.8 L0.8 5.2" stroke="#eee" stroke-width="1.1" fill="none"/></svg>
    <!-- active tab -->
    <div class="abs" style="left:132.5px;top:0;width:128.5px;height:18px;border-radius:4.2px 4.2px 0 0;background:linear-gradient(#585858,#474747 30%,#303030)"></div>
    <div class="abs" style="left:129.5px;top:15px;width:3px;height:3px;background:radial-gradient(circle at 0 0,transparent 2.9px,#313131 3.1px)"></div>
    <div class="abs" style="left:261px;top:15px;width:3px;height:3px;background:radial-gradient(circle at 100% 0,transparent 2.9px,#313131 3.1px)"></div>
    <svg class="abs" style="left:139px;top:4.6px" width="8.2" height="8.2" viewBox="0 0 16 16"><path fill="#20232a" d="M8 0C3.58 0 0 3.58 0 8c0 3.54 2.29 6.53 5.47 7.59.4.07.55-.17.55-.38 0-.19-.01-.82-.01-1.49-2.01.37-2.53-.49-2.69-.94-.09-.23-.48-.94-.82-1.13-.28-.15-.68-.52-.01-.53.63-.01 1.08.58 1.23.82.72 1.21 1.87.87 2.33.66.07-.52.28-.87.51-1.07-1.78-.2-3.64-.89-3.64-3.95 0-.87.31-1.59.82-2.15-.08-.2-.36-1.02.08-2.12 0 0 .67-.21 2.2.82.64-.18 1.32-.27 2-.27s1.36.09 2 .27c1.53-1.04 2.2-.82 2.2-.82.44 1.1.16 1.92.08 2.12.51.56.82 1.27.82 2.15 0 3.07-1.87 3.75-3.65 3.95.29.25.54.73.54 1.48 0 1.07-.01 1.93-.01 2.2 0 .21.15.46.55.38A8.01 8.01 0 0016 8c0-4.42-3.58-8-8-8z"/></svg>
    <div class="abs" style="left:151px;top:0.9px;width:97px;overflow:hidden;line-height:18px;font-size:7.65px;color:#d2d2d2;white-space:nowrap;-webkit-mask-image:linear-gradient(90deg,#000 86%,transparent 99%)">vscode-live-sass-compiler/s</div>
    <svg class="abs" style="left:250.5px;top:6px" width="6" height="6" viewBox="0 0 6 6"><path d="M0.8 0.8 L5.2 5.2 M5.2 0.8 L0.8 5.2" stroke="#fff" stroke-width="1.1" fill="none"/></svg>
    <!-- plus -->
    <svg class="abs" style="left:269.8px;top:5.8px" width="7" height="7" viewBox="0 0 7 7"><path d="M3.5 0.4 V6.6 M0.4 3.5 H6.6" stroke="#fff" stroke-width="1.3" fill="none"/></svg>
    <!-- tab search -->
    <div class="abs" style="left:447px;top:1.5px;width:15px;height:15px;border-radius:50%;background:#161616"></div>
    <svg class="abs" style="left:451.4px;top:6.6px" width="6.4" height="4.4" viewBox="0 0 6.4 4.4"><path d="M0.7 0.8 L3.2 3.3 L5.7 0.8" stroke="#fff" stroke-width="1.2" fill="none"/></svg>
  </div>
  <div id="ctool" class="abs">
    <svg class="abs" style="left:7.4px;top:6.4px" width="8.4" height="8.2" viewBox="0 0 8.4 8.2"><path d="M4.2 0.6 L0.8 4.1 L4.2 7.6 M0.9 4.1 H8" fill="none" stroke="#949494" stroke-width="0.95"/></svg>
    <svg class="abs" style="left:24.6px;top:6.4px" width="8.4" height="8.2" viewBox="0 0 8.4 8.2"><path d="M4.2 0.6 L7.6 4.1 L4.2 7.6 M7.5 4.1 H0.4" fill="none" stroke="#949494" stroke-width="0.95"/></svg>
    <svg class="abs" style="left:41.8px;top:6.1px" width="8.6" height="8.8" viewBox="0 0 17 17.5"><path d="M14 5 A6.4 6.4 0 1 0 14.8 10.5" fill="none" stroke="#fff" stroke-width="2.2"/><path d="M16 0.8 V7 H9.8 Z" fill="#fff"/></svg>
    <!-- omnibox -->
    <div class="abs" style="left:58px;top:3px;width:315px;height:15px;border-radius:7.5px;background:#1b1b1b"></div>
    <svg class="abs" style="left:64.8px;top:6.9px" width="5" height="6.5" viewBox="0 0 11 14"><rect x="0.5" y="6" width="10" height="7.6" rx="1" fill="#b4b4b4"/><path d="M2.8 6 V4 Q2.8 1 5.5 1 Q8.2 1 8.2 4 V6" fill="none" stroke="#b4b4b4" stroke-width="1.6"/></svg>
    <div class="abs" style="left:75.7px;top:3.6px;line-height:15px;font-size:8.5px;color:#8f8f8f;white-space:nowrap;letter-spacing:0.005px"><span style="color:#e6e6e6">github.com</span>/ritwickdey/vscode-live-sass-compiler/blob/master/docs/s..</div>
    <svg class="abs" style="left:342.6px;top:6.8px" width="8.2" height="7.4" viewBox="0 0 16 14.5"><path d="M0.8 0.8 L15.4 7.2 L0.8 13.6 L0.8 8.6 L9 7.2 L0.8 5.8 Z" fill="#e8e8e8"/></svg>
    <svg class="abs" style="left:359.8px;top:6.2px" width="8.4" height="8.2" viewBox="0 0 17 16.5"><path d="M8.5 1.6 L10.6 6.3 L15.7 6.8 L11.9 10.2 L13 15.2 L8.5 12.6 L4 15.2 L5.1 10.2 L1.3 6.8 L6.4 6.3 Z" fill="none" stroke="#e8e8e8" stroke-width="1.6" stroke-linejoin="round"/></svg>
    <!-- extensions -->
    <div class="abs" style="left:380.8px;top:5.3px;width:9.4px;height:10px;background:#fff"></div>
    <div class="abs" style="left:380.8px;top:5.3px;width:9.4px;line-height:10px;text-align:center;font-family:'Liberation Serif',serif;font-weight:bold;font-size:8.6px;color:#111">I</div>
    <div class="abs" style="left:398.1px;top:5.8px;width:9.3px;height:9.3px;border-radius:50%;background:#e0201c"></div>
    <svg class="abs" style="left:399.75px;top:7.45px" width="6" height="6" viewBox="0 0 12 12"><path d="M2.2 7.4 A4 4 0 0 1 7.6 2.4 M9.8 4.6 A4 4 0 0 1 4.4 9.6" fill="none" stroke="#fff" stroke-width="2.3"/><path d="M6.6 0 L10.4 2.6 L6.4 4.8 Z M5.4 12 L1.6 9.4 L5.6 7.2 Z" fill="#fff"/></svg>
    <svg class="abs" style="left:415.4px;top:5.4px" width="9.8" height="9.8" viewBox="0 0 20 20"><path d="M8 1.5 Q10.5 1.5 10.5 4 V5 H15 V9.5 H16 Q18.5 9.5 18.5 12 Q18.5 14.5 16 14.5 H15 V19 H10.8 V18 Q10.8 15.6 8.5 15.6 Q6.2 15.6 6.2 18 V19 H2 V14.6 H3 Q5.4 14.6 5.4 12.2 Q5.4 9.8 3 9.8 H2 V5 H5.5 V4 Q5.5 1.5 8 1.5 Z" fill="#fff"/></svg>
    <div class="abs" style="left:431.1px;top:4.5px;width:12px;height:12px;border-radius:50%;background:#6d4237;color:#f0e6e2;font-size:7.4px;line-height:12.9px;text-align:center">K</div>
    <div class="abs" style="left:453.6px;top:6.5px;width:2px;height:2px;border-radius:50%;background:#f4f4f4;box-shadow:0 3.15px #f4f4f4,0 6.3px #f4f4f4"></div>
  </div>
  <div id="cbm" class="abs">
    <!-- translate -->
    <svg class="abs" style="left:7px;top:4.4px" width="9.6" height="9.6" viewBox="0 0 19 19"><rect x="6.5" y="5" width="12" height="13.5" rx="1.5" fill="#e3e3e3"/><rect x="0.5" y="0.5" width="12" height="13.5" rx="1.5" fill="#4a86e8"/><path d="M3.5 4.5 H9.5 M6.5 3 V4.5 M8.5 4.5 Q7.5 8.5 3.5 10.5 M4.5 6.5 Q6 9.5 9.5 10.5" stroke="#fff" stroke-width="1.1" fill="none"/><path d="M11.5 15.5 L14 9.5 L16.5 15.5 M12.5 13.5 H15.5" stroke="#7a7a7a" stroke-width="1.1" fill="none"/></svg>
    <!-- dark blue icon -->
    <svg class="abs" style="left:24px;top:5px" width="8.4" height="9" viewBox="0 0 17 18"><path d="M8.5 0.8 L15.6 4.6 V11.2 L8.5 17 L1.4 11.2 V4.6 Z" fill="#123a5c"/><path d="M8.5 4 L12.6 6.4 V10.4 L8.5 13.4 L4.4 10.4 V6.4 Z" fill="#1d1d1d"/></svg>
    <!-- gmail -->
    <svg class="abs" style="left:41.6px;top:6px" width="9" height="7" viewBox="0 0 18 14"><path d="M0.5 13.5 V2.2 L4 5 V13.5 Z" fill="#4285f4"/><path d="M17.5 13.5 V2.2 L14 5 V13.5 Z" fill="#34a853"/><path d="M0.5 2.2 Q0.5 0.5 2 0.5 L9 6 L16 0.5 Q17.5 0.5 17.5 2.2 L14 5 L9 9 L4 5 Z" fill="#ea4335"/><path d="M14 5 L17.5 2.2 Q17.5 0.5 16 0.5 L14 2.1 Z" fill="#fbbc04"/><path d="M4 5 L0.5 2.2 Q0.5 0.5 2 0.5 L4 2.1 Z" fill="#c5221f"/></svg>
    <!-- linkedin -->
    <svg class="abs" style="left:59px;top:4.6px" width="9.4" height="9.6" viewBox="0 0 19 19"><rect x="0.5" y="2.5" width="16" height="16" rx="1.8" fill="#0a66c2"/><rect x="3" y="8.5" width="2.4" height="7.5" fill="#fff"/><circle cx="4.2" cy="6" r="1.5" fill="#fff"/><path d="M7.3 8.5 H9.6 V9.6 Q10.4 8.3 12 8.3 Q14.4 8.3 14.4 11.3 V16 H12 V11.8 Q12 10.4 10.9 10.4 Q9.7 10.4 9.7 11.8 V16 H7.3 Z" fill="#fff"/><circle cx="16" cy="3" r="2.6" fill="#e34a4a"/></svg>
    <!-- facebook -->
    <svg class="abs" style="left:75.8px;top:4.8px" width="9" height="9" viewBox="0 0 18 18"><circle cx="9" cy="9" r="8.8" fill="#1877f2"/><path d="M10 18 V11.4 H12.2 L12.6 8.8 H10 V7.2 Q10 6 11.4 6 H12.7 V3.7 Q11.8 3.5 10.7 3.5 Q7.4 3.5 7.4 6.8 V8.8 H5.2 V11.4 H7.4 V17.8 Z" fill="#fff"/></svg>
    <!-- youtube -->
    <svg class="abs" style="left:93px;top:6.2px" width="9.4" height="6.8" viewBox="0 0 19 13.5"><rect x="0.3" y="0.3" width="18.4" height="12.9" rx="3.4" fill="#f00"/><path d="M7.6 3.6 L12.6 6.75 L7.6 9.9 Z" fill="#fff"/></svg>
    <!-- notion -->
    <svg class="abs" style="left:110.6px;top:4.8px" width="8" height="9.4" viewBox="0 0 16 19"><path d="M1 2 L11 0.8 L15 3.6 V17 L4.6 18.2 L1 14.4 Z" fill="#fff" stroke="#111" stroke-width="1.3"/><path d="M5.5 14.5 V6.2 L10.8 14 V5.6 M4.5 6.3 H6.8 M9.6 5.6 H12 M4.5 14.6 H6.8 M9.6 13.9 H12" stroke="#111" stroke-width="1.3" fill="none"/></svg>
    <svg class="abs" style="left:127.7px;top:5.6px" width="8.2" height="6.8" viewBox="0 0 16 13"><path d="M0.5 1.8 Q0.5 0.6 1.7 0.6 H6 L7.6 2.4 H14.3 Q15.5 2.4 15.5 3.6 V11.2 Q15.5 12.4 14.3 12.4 H1.7 Q0.5 12.4 0.5 11.2 Z" fill="#bdbdbd"/></svg><span style="left:140px">Archiwum</span>
    <svg class="abs" style="left:182.7px;top:5.6px" width="8.2" height="6.8" viewBox="0 0 16 13"><path d="M0.5 1.8 Q0.5 0.6 1.7 0.6 H6 L7.6 2.4 H14.3 Q15.5 2.4 15.5 3.6 V11.2 Q15.5 12.4 14.3 12.4 H1.7 Q0.5 12.4 0.5 11.2 Z" fill="#bdbdbd"/></svg><span style="left:195px">Pożyczki</span>
    <svg class="abs" style="left:232px;top:5.6px" width="8.2" height="6.8" viewBox="0 0 16 13"><path d="M0.5 1.8 Q0.5 0.6 1.7 0.6 H6 L7.6 2.4 H14.3 Q15.5 2.4 15.5 3.6 V11.2 Q15.5 12.4 14.3 12.4 H1.7 Q0.5 12.4 0.5 11.2 Z" fill="#bdbdbd"/></svg><span style="left:244.5px">Prog</span>
    <svg class="abs" style="left:268.6px;top:5.6px" width="8.2" height="6.8" viewBox="0 0 16 13"><path d="M0.5 1.8 Q0.5 0.6 1.7 0.6 H6 L7.6 2.4 H14.3 Q15.5 2.4 15.5 3.6 V11.2 Q15.5 12.4 14.3 12.4 H1.7 Q0.5 12.4 0.5 11.2 Z" fill="#bdbdbd"/></svg><span style="left:281px">Zasoby</span>
    <svg class="abs" style="left:313.4px;top:5.6px" width="8.2" height="6.8" viewBox="0 0 16 13"><path d="M0.5 1.8 Q0.5 0.6 1.7 0.6 H6 L7.6 2.4 H14.3 Q15.5 2.4 15.5 3.6 V11.2 Q15.5 12.4 14.3 12.4 H1.7 Q0.5 12.4 0.5 11.2 Z" fill="#bdbdbd"/></svg><span style="left:326px">Code</span>
    <svg class="abs" style="left:353px;top:5.6px" width="8.2" height="6.8" viewBox="0 0 16 13"><path d="M0.5 1.8 Q0.5 0.6 1.7 0.6 H6 L7.6 2.4 H14.3 Q15.5 2.4 15.5 3.6 V11.2 Q15.5 12.4 14.3 12.4 H1.7 Q0.5 12.4 0.5 11.2 Z" fill="#bdbdbd"/></svg><span style="left:365px">Linux</span>
    <svg class="abs" style="left:392.6px;top:5.6px" width="8.2" height="6.8" viewBox="0 0 16 13"><path d="M0.5 1.8 Q0.5 0.6 1.7 0.6 H6 L7.6 2.4 H14.3 Q15.5 2.4 15.5 3.6 V11.2 Q15.5 12.4 14.3 12.4 H1.7 Q0.5 12.4 0.5 11.2 Z" fill="#bdbdbd"/></svg><span style="left:405px">McArron IT</span>
    <svg class="abs" style="left:451px;top:7px" width="5.4" height="4.6" viewBox="0 0 5.4 4.6"><path d="M0.5 0.5 L2.3 2.3 L0.5 4.1 M2.9 0.5 L4.7 2.3 L2.9 4.1" stroke="#f2f2f2" stroke-width="1.25" fill="none"/></svg>
  </div>
  <div id="page" class="abs"><div id="box"></div><div id="md">
<ul class="d">
<li>
<hr>
<p><b><i>[NEW]</i></b> <code><b>liveSassCompile.settings.formats</b></code> : To setup Format (style), Extension Name &amp; Save location for exported css [Multiple Format Supported].</p>
<ul class="ci">
<li><p><i>Format can be <code>expanded</code>, <code>compact</code>, <code>compressed</code> or <code>nested</code>. Default is <code>expanded</code>.</i></p></li>
<li><p><i>Extension Name can be <code>.css</code> or <code>.min.css</code>. Default is <code>.css</code>.</i></p></li>
<li><p><b><i>[New]</i></b> Save location is relative from workspace root or your Sass files.</p>
<ul class="sq">
<li><p>Default value is <code>null</code>. (<code>null</code> means, it will generate CSS in the location of scss/sass. By The Way, It is <code>null</code>, NOT <code>"null"</code>).</p></li>
<li><p>"<code>/</code>" denotes relative to root.</p></li>
<li><p>"<code>~</code>" denotes relative to every sass file. - Complex Scenario. <i>(<a>Checkout the example</a>)</i></p></li>
</ul>
</li>
<li><p><i>Example :</i></p>
<pre>    <span class="st">"liveSassCompile.settings.formats"</span>:[
        <span class="k">// This is Default.</span>
        {
            <span class="st">"format"</span>: <span class="st">"expanded"</span>,
            <span class="st">"extensionName"</span>: <span class="st">".css"</span>,
            <span class="st">"savePath"</span>: <span class="n">null</span>
        },
        <span class="k">// You can add more</span>
        {
            <span class="st">"format"</span>: <span class="st">"compressed"</span>,
            <span class="st">"extensionName"</span>: <span class="st">".min.css"</span>,
            <span class="st">"savePath"</span>: <span class="st">"/dist/css"</span>
        },
        <span class="k">// More Complex</span>
        {
            <span class="st">"format"</span>: <span class="st">"compressed"</span>,
            <span class="st">"extensionName"</span>: <span class="st">".min.css"</span>,
            <span class="st">"savePath"</span>: <span class="st">"~/../css/"</span>
        }
    ]</pre>
</li>
</ul>
<hr style="margin-bottom:12.2px">
</li>
<li><p><code><b>liveSassCompile.settings.excludeList</b></code> : To Exclude specific folders. All Sass/Scss files inside the folders will be ignored.</p></li>
</ul>
</div></div>
  <div id="sb" class="abs">
    <svg class="abs" style="left:1.4px;top:3.6px" width="4.6" height="3" viewBox="0 0 4.6 3"><path d="M0 3 L2.3 0 L4.6 3 Z" fill="#505050"/></svg>
    <div class="abs" style="left:1px;top:112px;width:6px;height:132px;background:#c1c1c1"></div>
    <svg class="abs" style="left:1.4px;top:483px" width="4.6" height="3" viewBox="0 0 4.6 3"><path d="M0 0 L2.3 3 L4.6 0 Z" fill="#505050"/></svg>
  </div>
</div>

</div>
</body>
</html>
